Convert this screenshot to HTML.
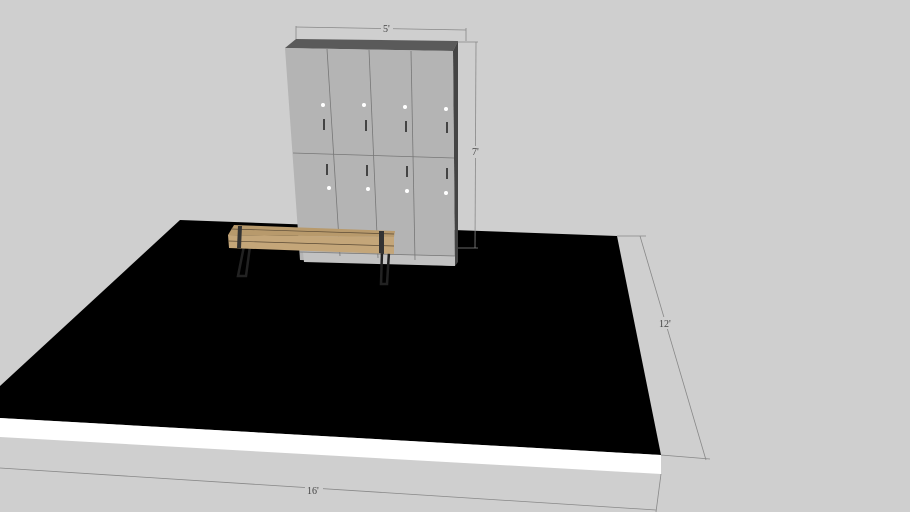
<!DOCTYPE html>
<html><head><style>
html,body{margin:0;padding:0;background:#cfcfcf;overflow:hidden}
svg{display:block}
text{font-family:"Liberation Serif",serif;font-size:10px;fill:#444}
</style></head><body>
<svg width="910" height="512" viewBox="0 0 910 512">
<rect width="910" height="512" fill="#cfcfcf"/>
<!-- floor -->
<polygon points="180,220 617,236 661,455 0,418 0,386" fill="#000"/>
<polygon points="0,418 661,455 661,474 0,437" fill="#fff"/>
<!-- dimension lines -->
<g stroke="#888" stroke-width="0.8" fill="none">
<line x1="0" y1="468" x2="656" y2="510"/>
<line x1="661" y1="474" x2="656" y2="512"/>
<line x1="617" y1="236" x2="646" y2="236"/>
<line x1="661" y1="455" x2="710" y2="459"/>
<line x1="640" y1="236" x2="706" y2="460"/>
<line x1="296" y1="39" x2="296" y2="26"/>
<line x1="466" y1="41" x2="466" y2="28"/>
<line x1="296" y1="27" x2="466" y2="30"/>
<line x1="458" y1="42" x2="478" y2="42"/>
<line x1="476" y1="42" x2="475" y2="248"/>
<line x1="455" y1="248" x2="478" y2="248"/>
</g>
<rect x="381" y="23" width="12" height="11" fill="#cfcfcf"/>
<text x="383" y="32">5'</text>
<rect x="471" y="146" width="10" height="12" fill="#cfcfcf"/>
<text x="472" y="155">7'</text>
<rect x="658" y="317" width="16" height="12" fill="#cfcfcf"/>
<text x="659" y="327">12'</text>
<rect x="305" y="484" width="18" height="12" fill="#cfcfcf"/>
<text x="307" y="494">16'</text>
<!-- locker -->
<polygon points="285,48 296,39 458,41 453,51" fill="#5a5a5a"/>
<polygon points="453,51 458,41 458,262 455,266" fill="#444"/>
<polygon points="285,48 453,51 455,266 300,260" fill="#b4b4b4"/>
<polygon points="303,252 455,256 455,266 304,262" fill="#c2c2c2"/>
<g stroke="#777" stroke-width="0.8">
<line x1="327" y1="49" x2="340" y2="256"/>
<line x1="369" y1="50" x2="378" y2="258"/>
<line x1="411" y1="51" x2="415" y2="260"/>
<line x1="293" y1="153" x2="454" y2="158"/>
<line x1="300" y1="252" x2="455" y2="256"/>
</g>
<g fill="#fff">
<circle cx="323" cy="105" r="2"/><circle cx="364" cy="105" r="2"/><circle cx="405" cy="107" r="2"/><circle cx="446" cy="109" r="2"/>
<circle cx="329" cy="188" r="2"/><circle cx="368" cy="189" r="2"/><circle cx="407" cy="191" r="2"/><circle cx="446" cy="193" r="2"/>
</g>
<g fill="#444">
<rect x="323" y="119" width="2" height="11"/><rect x="365" y="120" width="2" height="11"/><rect x="405" y="121" width="2" height="11"/><rect x="446" y="122" width="2" height="11"/>
<rect x="326" y="164" width="2" height="11"/><rect x="366" y="165" width="2" height="11"/><rect x="406" y="166" width="2" height="11"/><rect x="446" y="168" width="2" height="11"/>
</g>
<!-- bench -->
<g stroke="#222" stroke-width="2.5" fill="none">
<polyline points="244,246 238,276 246,276 250,246"/>
<polyline points="382,252 381,284 387,284 389,252"/>
</g>
<polygon points="234,225 395,231 394,237 228,235" fill="#b89a6c"/>
<polygon points="228,235 394,237 394,254 229,248" fill="#c4a679"/>
<g stroke="#5a4a35" stroke-width="0.7">
<line x1="231" y1="229" x2="394" y2="234"/>
<line x1="228" y1="241" x2="394" y2="246"/>
</g>
<g fill="#333">
<polygon points="238,226 242,226 241,248 237,248"/>
<polygon points="379,231 384,231 384,254 379,253"/>
</g>
</svg>
</body></html>
